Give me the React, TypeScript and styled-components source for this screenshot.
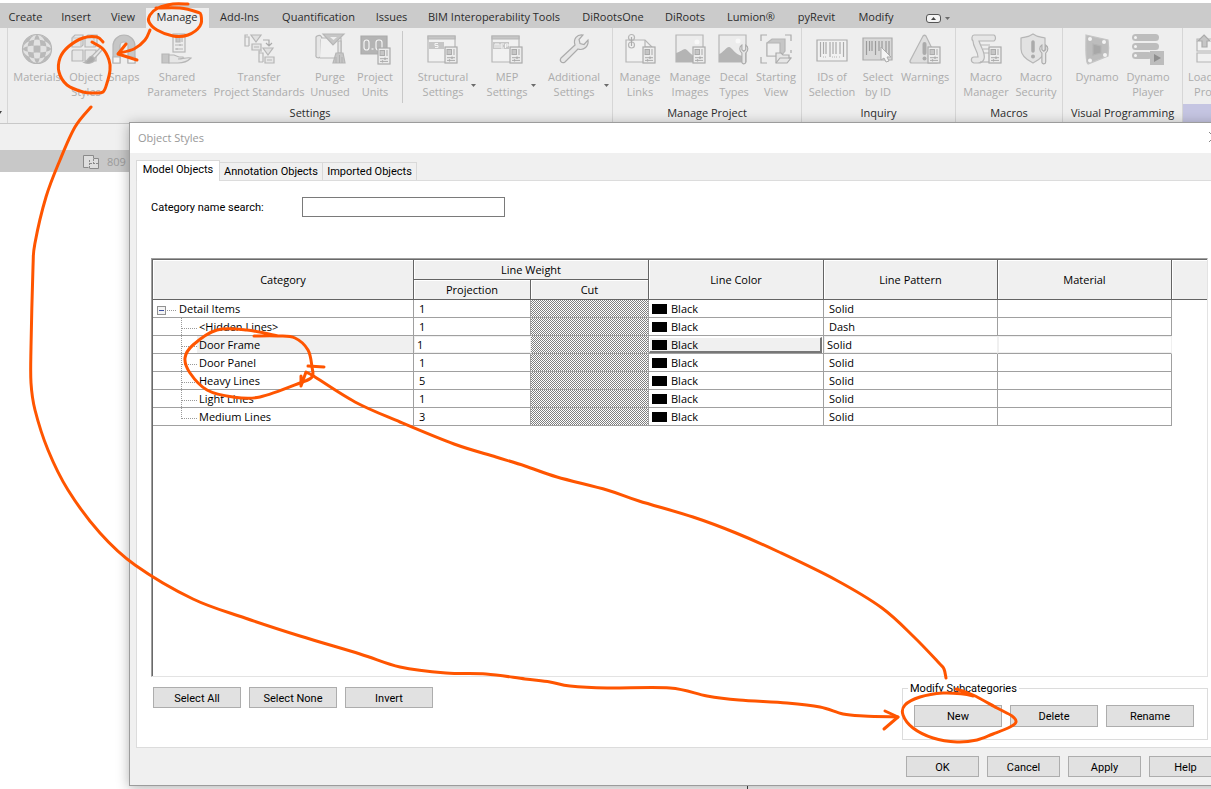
import React from "react";
import styled, { createGlobalStyle } from "styled-components";

const uiFont = `"Open Sans", "Noto Sans", sans-serif`;
const controlFont = `Roboto, "Open Sans", sans-serif`;

const GlobalStyle = createGlobalStyle`
  *, *::before, *::after { box-sizing: border-box; }
  body { margin: 0; background: #fff; font-family: ${uiFont}; font-size: 11px; overflow: hidden; }
  button, input { font: inherit; color: inherit; margin: 0; }
`;

/* ---------- application frame ---------- */

const Desktop = styled.div`
  position: relative;
  display: flex;
  flex-direction: column;
  min-height: 100vh;
  overflow: hidden;
  padding-top: 3px;
`;

const TabStrip = styled.nav`
  display: flex;
  height: 25px;
  background: #cbcbcb;
`;

const RibbonTab = styled.button<{ $width: number; $active?: boolean }>`
  flex: none;
  width: ${(p) => p.$width}px;
  margin: ${(p) => (p.$active ? "5px 0 0" : "0")};
  padding: ${(p) => (p.$active ? "0 1px 2px 0" : "3px 1px 0 0")};
  border: 0;
  background: ${(p) => (p.$active ? "#eeeeee" : "transparent")};
  color: #2b2b2b;
  line-height: 18px;
  white-space: nowrap;
`;

const RibbonToggle = styled.button`
  display: flex;
  align-items: center;
  gap: 4px;
  border: 0;
  background: none;
  padding: 6px 0 0 20px;
`;

const Ribbon = styled.div`
  display: flex;
  height: 96px;
  background: #eeeeee;
  border-bottom: 1px solid #c8c8c8;
`;

const PanelEdge = styled.div`
  flex: none;
  width: 8px;
  padding-top: 83px;
  border-right: 1px solid #d6d6d6;

  svg { display: block; }
`;

const Panel = styled.section<{ $width: number }>`
  flex: none;
  display: flex;
  flex-direction: column;
  width: ${(p) => p.$width}px;
  border-right: 1px solid #d6d6d6;
`;

const PanelTools = styled.div<{ $lead: number }>`
  display: flex;
  height: 76px;
  padding: 5px 0 0 ${(p) => p.$lead}px;
`;

const PanelTitle = styled.h2<{ $tinted?: boolean }>`
  margin: 0;
  height: 19px;
  background: ${(p) => (p.$tinted ? "#c5c5e2" : "transparent")};
  color: #2b2b2b;
  font-size: 11px;
  font-weight: 400;
  line-height: 17px;
  text-align: center;
  white-space: nowrap;
`;

const Tool = styled.button<{ $width: number; $lead?: number }>`
  flex: none;
  display: flex;
  align-items: flex-start;
  height: 70px;
  margin-left: ${(p) => p.$lead ?? 0}px;
  padding: 0;
  border: 0;
  background: none;
  color: #acacac;

  > span {
    display: flex;
    flex-direction: column;
    align-items: center;
    width: ${(p) => p.$width}px;
    line-height: 15px;
    white-space: pre;
    text-align: center;
  }
  > span > svg { display: block; flex: none; margin-bottom: 4px; }
`;

const Caret = styled.i<{ $top: number }>`
  flex: none;
  width: 5px;
  height: 3px;
  margin-top: ${(p) => p.$top}px;
  background: #6b6b6b;
  clip-path: polygon(0 0, 100% 0, 50% 100%);
`;

const ToolDivider = styled.div`
  flex: none;
  width: 1px;
  height: 72px;
  margin: -2px 0 0 8px;
  background: #c8c8c8;
`;

const OptionsBar = styled.div`
  height: 26px;
  background: #f0f0f0;
`;

const ViewTabs = styled.div`
  display: flex;
  align-items: center;
  gap: 8px;
  height: 22px;
  padding: 1px 0 0 83px;
  background: #c8c8c8;
  color: #9b9b9b;
`;

const ViewEdge = styled.div`
  width: 1px;
  height: 4px;
  margin: auto 0 0 747px;
  background: #444;
`;

/* ---------- dialog ---------- */

const Dialog = styled.section`
  position: absolute;
  top: 122px;
  left: 129px;
  right: -26px;
  bottom: 3px;
  display: flex;
  flex-direction: column;
  background: #f0f0f0;
  border: 1px solid #9c9c9c;
  box-shadow: 0 2px 12px rgba(0, 0, 0, 0.3);
  color: #000;
`;

const TitleBar = styled.header`
  display: flex;
  align-items: center;
  justify-content: space-between;
  height: 30px;
  padding: 0 17px 2px 8px;
  background: #fff;

  h1 { margin: 0; font-size: 11px; font-weight: 400; color: #999; }
  button { display: flex; padding: 0; border: 0; background: none; }
`;

const DialogTabs = styled.div`
  display: flex;
  align-items: flex-end;
  height: 27px;
  padding-left: 6px;
`;

const DialogTab = styled.button<{ $width: number; $active?: boolean }>`
  width: ${(p) => p.$width}px;
  height: ${(p) => (p.$active ? 21 : 18)}px;
  margin-bottom: ${(p) => (p.$active ? -1 : 0)}px;
  padding: ${(p) => (p.$active ? "0 0 2px" : "1px 0 0")};
  border: 1px solid #d9d9d9;
  border-bottom: 0;
  border-left-width: ${(p) => (p.$active ? 1 : 0)}px;
  background: ${(p) => (p.$active ? "#fff" : "#f0f0f0")};
  font-family: ${controlFont};
  line-height: 16px;
  white-space: nowrap;
  z-index: 1;
`;

const Pane = styled.div`
  flex: 1;
  display: flex;
  flex-direction: column;
  margin: 0 7px 0 6px;
  padding: 16px 20px 7px 14px;
  border: 1px solid #dcdcdc;
  background: #fff;
`;

const SearchRow = styled.div`
  display: flex;
  align-items: center;
  font-family: ${controlFont};

  label { width: 151px; }
  input { width: 203px; height: 20px; padding: 0 4px; border: 1px solid #7a7a7a; background: #fff; }
`;

const GridFrame = styled.div`
  flex: 1;
  min-height: 0;
  margin-top: 41px;
  padding: 1px 0 0 1px;
  border: 1px solid #a0a0a0;
  border-right-color: #e3e3e3;
  border-bottom-color: #e3e3e3;
  box-shadow: inset 1px 1px #696969;
  background: #fff;
`;

const Grid = styled.table`
  width: 100%;
  table-layout: fixed;
  border-collapse: separate;
  border-spacing: 0;
  line-height: 16px;
`;

const HeadCell = styled.th<{ $last?: boolean }>`
  height: 20px;
  padding: 0;
  border: 0 solid #646464;
  border-width: 0 ${(p) => (p.$last ? 0 : 1)}px 1px 0;
  background: #f0f0f0;
  box-shadow: inset 1px 1px #fff;
  font-weight: 400;
`;

const Cell = styled.td<{ $current?: boolean; $hatched?: boolean }>`
  height: 18px;
  padding: 0 0 0 ${(p) => (p.$current ? 3 : 5)}px;
  border: 0 solid #a0a0a0;
  border-width: 0 1px 1px 0;
  white-space: nowrap;
  ${(p) => p.$current && `border-right-color: #f0f0f0; box-shadow: inset 0 1px #f0f0f0, inset 0 -1px #f0f0f0, inset 1px 0 #f0f0f0;`}
  ${(p) =>
    p.$hatched &&
    `background: repeating-conic-gradient(#808080 0 25%, #fff 0 50%) 0 0 / 2px 2px;`}
`;

const BlankCell = styled.td`
  padding: 0;
`;

const TreeCell = styled(Cell)<{ $root?: boolean }>`
  padding: 0 0 0 ${(p) => (p.$root ? 4 : 28)}px;

  > div { display: flex; align-items: center; height: 17px; }
  > div > svg { flex: none; }
`;

const TreeLabel = styled.span<{ $current?: boolean }>`
  flex: 1;
  align-self: stretch;
  padding-left: 2px;
  background: ${(p) => (p.$current ? "#f0f0f0" : "transparent")};
  line-height: 18px;
`;

const Expander = styled.button`
  display: flex;
  padding: 0;
  border: 0;
  background: none;
`;

const ColorCell = styled(Cell)`
  padding: 0;
`;

const ColorValue = styled.div`
  display: flex;
  align-items: center;
  gap: 4px;
  height: 17px;
  padding-left: 3px;
`;

const ColorButton = styled.button`
  display: flex;
  align-items: center;
  gap: 4px;
  width: calc(100% - 1px);
  height: 16px;
  padding: 1px 0 0 2px;
  border: 1px solid #fff;
  border-right: 2px solid #777;
  border-bottom: 2px solid #777;
  background: #f0f0f0;
  overflow: hidden;
  line-height: 14px;
`;

const Swatch = styled.i`
  width: 15px;
  height: 10px;
  background: #000;
`;

const ActionRow = styled.div`
  display: flex;
  justify-content: space-between;
  padding: 10px 0 0 2px;
`;

const ButtonRow = styled.div`
  display: flex;
  align-items: flex-start;
  gap: 8px;
`;

const PushButton = styled.button<{ $width: number }>`
  flex: none;
  width: ${(p) => p.$width}px;
  height: 21px;
  padding: 2px 0 0;
  border: 1px solid #adadad;
  background: #e1e1e1;
  font-family: ${controlFont};
  line-height: 16px;
`;

const GroupBox = styled.fieldset`
  margin: -7px 0 0;
  padding: 0 13px 12px 11px;
  border: 1px solid #dcdcdc;
  height: 60px;

  legend { padding: 0 2px; margin-left: -6px; line-height: 18px; height: 17px; font-family: ${controlFont}; }
  ${ButtonRow} { padding-top: 8px; }
  ${PushButton} { height: 22px; }
`;

const Footer = styled.footer`
  display: flex;
  justify-content: flex-end;
  gap: 8px;
  padding: 8px 14px 8px 0;
`;

const Markup = styled.svg`
  position: absolute;
  top: 0;
  left: 0;
  pointer-events: none;
`;

/* ---------- ribbon icons ---------- */

const LINE = "#b6b6b6";
const PALE = "#e6e6e6";
const MID = "#c6c6c6";
const DARK = "#ababab";

const Icon = ({ children }: { children: React.ReactNode }) => (
  <svg width="32" height="32" viewBox="0 0 32 32" fill="none" stroke={LINE} strokeWidth="1.2" aria-hidden="true">
    {children}
  </svg>
);

const Card = ({ x, y }: { x: number; y: number }) => (
  <g transform={`translate(${x} ${y})`}>
    <rect x="0" y="0" width="12" height="16" fill="#ececec" stroke={DARK} />
    <rect x="2" y="2.5" width="4.5" height="5" fill={MID} stroke={DARK} strokeWidth="1" />
    <path d="M9 2v6M2 10.7h8M2 13.4h8" strokeWidth="1" stroke={DARK} />
    <path d="M7 9.5v2.4M4.5 12.2v2.4" strokeWidth="1.2" stroke={DARK} />
  </g>
);

const Wrench = ({ x, y, s = 1 }: { x: number; y: number; s?: number }) => (
  <path
    transform={`translate(${x} ${y}) scale(${s})`}
    d="M2 0v5l2 1.5L6 5V0c3 1.500 3 6 0 8.500V18c0 2.500-4 2.500-4 0V8.500C-1 6-1 1.500 2 0z"
    fill={PALE}
    stroke={DARK}
    strokeWidth="1.2"
  />
);

const icons: Record<string, React.ReactNode> = {
  materials: (
    <>
      <circle cx="16" cy="16" r="14.500" fill="#e2e2e2" />
      <path
        fillRule="evenodd"
        stroke="none"
        fill="#b9b9b9"
        d="M16 2a14 14 0 1 0 0 28a14 14 0 1 0 0-28zM16 2a9.500 14 0 1 0 0 28a9.500 14 0 1 0 0-28zM16 2a3.500 14 0 1 0 0 28a3.500 14 0 1 0 0-28zM2 16a14 9.500 0 1 0 28 0a14 9.500 0 1 0-28 0zM2 16a14 3.500 0 1 0 28 0a14 3.500 0 1 0-28 0z"
      />
    </>
  ),
  objectStyles: (
    <>
      <path d="M3 4l2-2h8v10l-2 2H2V5zM16 4l2-2h9v10l-2 2H15V5zM3 17h10v11H2V18zM15 17h11v11H15z" fill={PALE} />
      <path d="M2 5h9v9M15 5h9v9" stroke={MID} />
      <path d="M31 14L22 23l2.500 2.500L32 17z" fill={PALE} />
      <path d="M22 23c-4 0-3 5-8 6.500c5 2 11 0 10.500-4z" fill={DARK} />
    </>
  ),
  snaps: (
    <>
      <path d="M5 30V13a11 11 0 0 1 22 0V30H20V13a4 4 0 0 0-8 0V30z" fill={MID} />
      <path d="M5 24h7v6H5zM20 24h7v6h-7z" fill="#f4f4f4" />
    </>
  ),
  sharedParameters: (
    <>
      <rect x="12" y="1" width="12" height="18" fill="#ececec" />
      <path d="M15 3h4v6h-4z" fill={MID} />
      <path d="M21 3v6M14 12h8M14 16h8" />
      <path d="M19 11v2M16 15v2" />
      <path d="M1 21h7v9H1z" fill={MID} />
      <path d="M8 22h5l5 2h4c1 2-2 2-5 2c4 0 9-2 13-1c-3 3-8 5-13 5H8z" fill={PALE} />
    </>
  ),
  transfer: (
    <>
      <path d="M5 2H2v11h4M2 4h4v9" />
      <path d="M8 2h10l-5 7z" fill="#e0e0e0" />
      <path d="M9 11h9v6H9z" fill={PALE} />
      <path d="M20 7h6v6M23 10l3 3l3-3" stroke={DARK} />
      <path d="M19 18h-3v11h4M16 20h4v9" />
      <path d="M20 15h10l-5 7z" fill="#e0e0e0" />
      <path d="M22 24h9v6h-9zM24 27h5M11 14h5" fill={PALE} />
    </>
  ),
  purge: (
    <>
      <path d="M3 3c4-2 6 2 4 4v16c-1 3-6 2-5-1V4z" fill={PALE} />
      <path d="M7 5h20v20H6" fill="#f0f0f0" />
      <path d="M9 1h21L19 12z" fill={MID} />
      <path d="M16 4h7l-3.500 3z" fill="#eee" stroke="none" />
      <path d="M24 8h3v12h-3z" fill={PALE} />
      <path d="M22 20h7l2 10H19z" fill={MID} />
      <path d="M22 24v6M25.500 22v8M28 24v6" stroke={DARK} strokeWidth="0.8" />
    </>
  ),
  units: (
    <>
      <path d="M2 3h26v18H2z" fill="#b4b4b4" stroke={DARK} />
      <rect x="5" y="7" width="5" height="10" rx="2.500" stroke="#f4f4f4" />
      <path d="M12.500 16h2" stroke="#f4f4f4" />
      <rect x="17" y="7" width="6" height="10" rx="2.500" stroke="#f4f4f4" />
      <Card x={19} y={15} />
    </>
  ),
  structural: (
    <>
      <path d="M1 3h27v26H1z" fill="#f1f1f1" />
      <path d="M1 3h27v3H1z" fill={MID} />
      <path d="M2 9h15v7H2z" fill={MID} stroke="none" />
      <path d="M11 10.500H8v2h3v2H8" stroke="#f4f4f4" strokeWidth="1" />
      <Card x={18} y={14} />
    </>
  ),
  mep: (
    <>
      <path d="M1 3h27v26H1z" fill="#f1f1f1" />
      <path d="M1 3h27v3H1z" fill={MID} />
      <path d="M2 9h16v7H2z" fill={MID} stroke="none" />
      <path d="M4 15v-4h4v4M6 11v4M13 11h-3v4h3M10 13h2M14.500 15v-4H17v2h-2" stroke="#f6f6f6" strokeWidth="1" />
      <Card x={19} y={14} />
    </>
  ),
  additional: (
    <path
      d="M3 25L17 12C15 6 19 1 25 2L21 6.500l1 4l4 1L30 7c1 6-4 11-10 9L7 29c-3 2-6-1-4-4z"
      fill={PALE}
      stroke={DARK}
    />
  ),
  links: (
    <>
      <path d="M2 7h19l7 7v15H2z" fill="#f1f1f1" />
      <path d="M21 7v7h7" />
      <circle cx="7.500" cy="4.500" r="3" />
      <circle cx="7.500" cy="12" r="3" />
      <path d="M7.500 4v9" stroke={DARK} />
      <Card x={19} y={14} />
    </>
  ),
  images: (
    <>
      <path d="M2 2h27v27H2z" fill="#ececec" />
      <circle cx="23" cy="9" r="2.500" fill="#f8f8f8" stroke="none" />
      <path d="M2 20c4-1 7-4 9-4s4 4 10 8v5H2z" fill="#b4b4b4" stroke="none" />
      <Card x={19} y={14} />
    </>
  ),
  decal: (
    <>
      <path d="M1 2h27v27H1z" fill="#ececec" />
      <circle cx="20" cy="8" r="2.500" fill="#f8f8f8" stroke="none" />
      <path d="M1 21c4-1 7-7 10-7s5 7 13 9v6H1z" fill="#b4b4b4" stroke="none" />
      <Wrench x={22} y={12} s={0.95} />
    </>
  ),
  startingView: (
    <>
      <path d="M1 8V2h6M25 2h6v6M1 24v6h6M31 20v-3" stroke={DARK} />
      <path d="M7 10l5-4h13v12l-4 5H7z" fill={MID} />
      <path d="M7 10h13v13H7z" fill="#efefef" />
      <path d="M16 30V20h5l2 2h6v3h2l-4 5z" fill={PALE} stroke={DARK} />
      <path d="M16 30l4-5h11" stroke={DARK} />
    </>
  ),
  barcode: (
    <>
      <path d="M1 7h30v21H1z" fill="#f1f1f1" stroke={DARK} />
      <path d="M4.500 9v15M7.500 9v12M10 9v12M14 9v15M17 9v12M20 9v12M24 9v12M27.500 9v15" stroke={DARK} />
      <path d="M7 24h4M16 24h5M23 24h2" strokeDasharray="1 1" />
    </>
  ),
  selectId: (
    <>
      <path d="M1 5h29v22H1z" fill="#d8d8d8" stroke={DARK} />
      <path d="M4.500 8v14M7.500 8v10M10 8v10M13.500 8v14M17 8v10M20 8v8M24 8v14M27 8v14" stroke="#9a9a9a" />
      <path d="M19 14v13l3-2l2 4l3-1l-2-4h4z" fill="#f4f4f4" stroke={DARK} strokeWidth="1" />
    </>
  ),
  warnings: (
    <>
      <path d="M14 3c1-1 2-1 3 0l12 25c0 1-1 2-2 2H3c-2 0-2-1-2-2z" fill="#dedede" />
      <path d="M15.500 11v9" stroke={DARK} strokeWidth="4" strokeLinecap="round" />
      <circle cx="15.500" cy="25.500" r="2" fill={DARK} stroke="none" />
      <Card x={19} y={14} />
    </>
  ),
  macroManager: (
    <>
      <path d="M4 2h20c2 1 2 5 0 6H9c2 7 7 12 5 18c-1 3-3 4-6 4H4c-4-1-3-6 0-6h4C8 18 3 14 3 8C1 6 2 2 4 2z" fill={PALE} />
      <path d="M11 12h9M13 16h6M14 20h5" />
      <path d="M10 29h14" />
      <Card x={19} y={14} />
    </>
  ),
  macroSecurity: (
    <>
      <path d="M13 1c4 3 8 3 12 4v11c0 6-6 11-12 14C7 27 1 22 1 16V5c4-1 8-1 12-4z" fill="#e2e2e2" />
      <path d="M13 9v9" stroke={DARK} strokeWidth="3.500" strokeLinecap="round" />
      <circle cx="13" cy="23.500" r="2" fill={DARK} stroke="none" />
      <Wrench x={20} y={12} s={0.95} />
    </>
  ),
  dynamo: (
    <>
      <path d="M5 2l22 5c1 6 1 10 0 16L7 31C4 30 5 8 5 2z" fill="#bdbdbd" stroke="#c6c6c6" />
      <path d="M12 11l8 2v7l-8 2z" fill="#a8a8a8" stroke="#b4b4b4" />
      <g fill="#f4f4f4" stroke="none">
        <circle cx="9" cy="6" r="2" />
        <circle cx="23" cy="9" r="2" />
        <circle cx="24" cy="22" r="2" />
        <circle cx="9" cy="27.500" r="2" />
      </g>
    </>
  ),
  dynamoPlayer: (
    <>
      <g fill="#bdbdbd" stroke="none">
        <rect x="0" y="1" width="27" height="7" rx="3.500" />
        <rect x="0" y="10" width="27" height="7" rx="3.500" />
        <rect x="0" y="19" width="20" height="7" rx="3.500" />
        <path d="M18 18h14v14H18z" />
      </g>
      <g fill="#f4f4f4" stroke="none">
        <circle cx="3.500" cy="4.500" r="1.500" />
        <circle cx="3.500" cy="13.500" r="1.500" />
        <circle cx="3.500" cy="22.500" r="1.500" />
      </g>
      <path d="M22 21v8l7-4z" fill="#8f8f8f" stroke="none" />
    </>
  ),
  load: (
    <>
      <path d="M1 29V20h30v9zM1 18V6h30v12z" fill="#f1f1f1" />
      <path d="M8 2l6 6h-3v6H6V8H2z" fill={MID} stroke={DARK} />
    </>
  ),
};

type ToolSpec = { icon: string; label: string; width: number; lead?: number; menu?: boolean; divider?: boolean };

const panels: { title: string; width: number; lead: number; tinted?: boolean; tools: ToolSpec[] }[] = [
  {
    title: "Settings",
    width: 605,
    lead: 2,
    tools: [
      { icon: "materials", label: "Materials", width: 54 },
      { icon: "objectStyles", label: "Object\nStyles", width: 44 },
      { icon: "snaps", label: "Snaps", width: 32 },
      { icon: "sharedParameters", label: "Shared\nParameters", width: 74 },
      { icon: "transfer", label: "Transfer\nProject Standards", width: 90 },
      { icon: "purge", label: "Purge\nUnused", width: 52 },
      { icon: "units", label: "Project\nUnits", width: 38, divider: true },
      { icon: "structural", label: "Structural\nSettings", width: 56, lead: 12, menu: true },
      { icon: "mep", label: "MEP\nSettings", width: 48, lead: 7, menu: true },
      { icon: "additional", label: "Additional\nSettings", width: 60, lead: 8, menu: true },
    ],
  },
  {
    title: "Manage Project",
    width: 189,
    lead: 2,
    tools: [
      { icon: "links", label: "Manage\nLinks", width: 50 },
      { icon: "images", label: "Manage\nImages", width: 50 },
      { icon: "decal", label: "Decal\nTypes", width: 38 },
      { icon: "startingView", label: "Starting\nView", width: 46 },
    ],
  },
  {
    title: "Inquiry",
    width: 154,
    lead: 4,
    tools: [
      { icon: "barcode", label: "IDs of\nSelection", width: 52 },
      { icon: "selectId", label: "Select\nby ID", width: 40 },
      { icon: "warnings", label: "Warnings", width: 54 },
    ],
  },
  {
    title: "Macros",
    width: 107,
    lead: 4,
    tools: [
      { icon: "macroManager", label: "Macro\nManager", width: 52 },
      { icon: "macroSecurity", label: "Macro\nSecurity", width: 48 },
    ],
  },
  {
    title: "Visual Programming",
    width: 120,
    lead: 8,
    tools: [
      { icon: "dynamo", label: "Dynamo", width: 52 },
      { icon: "dynamoPlayer", label: "Dynamo\nPlayer", width: 50 },
    ],
  },
  {
    title: "",
    width: 120,
    lead: 0,
    tinted: true,
    tools: [{ icon: "load", label: "Load into\nProject", width: 58 }],
  },
];

const ribbonTabs: [string, number][] = [
  ["Create", 52],
  ["Insert", 49],
  ["View", 45],
  ["Manage", 63],
  ["Add-Ins", 62],
  ["Quantification", 96],
  ["Issues", 50],
  ["BIM Interoperability Tools", 155],
  ["DiRootsOne", 83],
  ["DiRoots", 61],
  ["Lumion®", 71],
  ["pyRevit", 60],
  ["Modify", 59],
];

/* ---------- category data ---------- */

const rows = [
  { name: "Detail Items", projection: "1", color: "Black", pattern: "Solid" },
  { name: "<Hidden Lines>", projection: "1", color: "Black", pattern: "Dash" },
  { name: "Door Frame", projection: "1", color: "Black", pattern: "Solid" },
  { name: "Door Panel", projection: "1", color: "Black", pattern: "Solid" },
  { name: "Heavy Lines", projection: "5", color: "Black", pattern: "Solid" },
  { name: "Light Lines", projection: "1", color: "Black", pattern: "Solid" },
  { name: "Medium Lines", projection: "3", color: "Black", pattern: "Solid" },
];
const currentRow = 2;

const RootBranch = () => (
  <Expander aria-label="Collapse Detail Items">
    <svg width="20" height="17" viewBox="0 0 20 17" fill="none">
      <rect x="0.500" y="6.500" width="8" height="8" fill="#f4f4f4" stroke="#919191" />
      <path d="M2 10.500h5" stroke="#3c4fa0" />
      <path d="M10 10.500h10" stroke="#999" strokeDasharray="1 1" />
    </svg>
  </Expander>
);

const Branch = ({ last }: { last: boolean }) => (
  <svg width="16" height="17" viewBox="0 0 16 17" fill="none" stroke="#999" strokeDasharray="1 1" aria-hidden="true">
    <path d={last ? "M0.500 0v11" : "M0.500 0v17"} />
    <path d="M1 10.500h15" />
  </svg>
);

/* ---------- hand-drawn markup ---------- */

type Point = [number, number];

const smooth = (pts: Point[]) => {
  let d = `M${pts[0][0]} ${pts[0][1]}`;
  for (let i = 0; i < pts.length - 1; i++) {
    const a = pts[Math.max(i - 1, 0)];
    const b = pts[i];
    const c = pts[i + 1];
    const e = pts[Math.min(i + 2, pts.length - 1)];
    d += `C${b[0] + (c[0] - a[0]) / 6} ${b[1] + (c[1] - a[1]) / 6} ${c[0] - (e[0] - b[0]) / 6} ${c[1] - (e[1] - b[1]) / 6} ${c[0]} ${c[1]}`;
  }
  return d;
};

const curves: Point[][] = [
  [[188, 4], [173, 4], [158, 8], [150, 15], [149, 22], [157, 30], [173, 36], [188, 35], [200, 26], [201, 15], [197, 12], [180, 8], [156, 8]],
  [[150, 30], [145, 40], [134, 49], [119, 53]],
  [[92, 42], [103, 49], [109, 60], [110, 70], [107, 83], [103, 92], [94, 93], [83, 92], [67, 85], [59, 72], [60, 58], [68, 47], [83, 38], [97, 37], [103, 42]],
  [[91, 107], [75, 127], [60, 160], [46, 197], [35, 243], [33, 267], [31, 347], [31, 383], [35, 410], [48, 450], [68, 490], [100, 533], [135, 565], [193, 599], [245, 618], [300, 636], [360, 654], [400, 667], [446, 673], [486, 674], [525, 679], [550, 682], [570, 686], [607, 688], [670, 688], [707, 696], [739, 700], [787, 703], [820, 707], [843, 714], [864, 716], [898, 717]],
  [[956, 689], [973, 695], [997, 708], [1012, 716], [1016, 722], [1010, 727], [993, 734], [977, 740], [957, 742], [933, 738], [913, 728], [903, 715], [905, 705], [920, 697], [943, 693], [963, 694], [973, 696]],
  [[946, 678], [944, 669], [939, 663], [914, 637], [882, 608], [836, 580], [779, 552], [736, 533], [693, 517], [639, 501], [607, 490], [557, 477], [525, 466], [496, 457], [454, 444], [400, 422], [355, 402], [312, 375]],
  [[254, 336], [278, 336], [295, 338], [308, 350], [312, 367], [312, 377], [300, 383], [260, 397], [233, 397], [207, 390], [190, 373], [185, 358], [193, 345], [217, 330], [247, 330], [278, 336]],
];

const strokes = ["M126 44L118 54L137 60", "M885 711L898 717L884 729", "M312 375L306 372L301 386V376", "M308 366L324 367"];

export default function App() {
  return (
    <>
      <GlobalStyle />
      <Desktop>
        <TabStrip>
          {ribbonTabs.map(([name, width]) => (
            <RibbonTab key={name} $width={width} $active={name === "Manage"}>
              {name}
            </RibbonTab>
          ))}
          <RibbonToggle aria-label="Minimize ribbon">
            <svg width="15" height="9" viewBox="0 0 15 9" aria-hidden="true">
              <rect x="0.500" y="0.500" width="14" height="8" rx="2.500" fill="#f4f4f4" stroke="#555" />
              <path d="M5 6l2.500-3L10 6z" fill="#444" />
            </svg>
            <Caret $top={0} />
          </RibbonToggle>
        </TabStrip>

        <Ribbon>
          <PanelEdge>
            <svg width="2" height="3" viewBox="0 0 2 3" aria-hidden="true">
              <path d="M0 0h2L0 3z" fill="#444" />
            </svg>
          </PanelEdge>
          {panels.map((panel) => (
            <Panel key={panel.title || "load"} $width={panel.width}>
              <PanelTools $lead={panel.lead}>
                {panel.tools.map((tool) => (
                  <React.Fragment key={tool.icon}>
                    <Tool $width={tool.width} $lead={tool.lead}>
                      <span>
                        <Icon>{icons[tool.icon]}</Icon>
                        {tool.label}
                      </span>
                      {tool.menu && <Caret $top={51} />}
                    </Tool>
                    {tool.divider && <ToolDivider />}
                  </React.Fragment>
                ))}
              </PanelTools>
              <PanelTitle $tinted={panel.tinted}>{panel.title}</PanelTitle>
            </Panel>
          ))}
        </Ribbon>

        <OptionsBar />
        <ViewTabs>
          <svg width="16" height="14" viewBox="0 0 16 14" fill="none" stroke="#8a8a8a" aria-hidden="true">
            <path d="M10.500 3.500v-3h-10v12h5" fill="#dedede" />
            <path d="M6.500 3.500h9v10h-9z" fill="#dedede" stroke="none" />
            <path d="M10.500 3.500h5v10h-9" />
            <path d="M6.500 13v-9M7 8.500h8M10.500 4v4" strokeDasharray="2 1" />
          </svg>
          809
        </ViewTabs>
        <ViewEdge />

        <Dialog role="dialog" aria-labelledby="dialog-title">
          <TitleBar>
            <h1 id="dialog-title">Object Styles</h1>
            <button aria-label="Close">
              <svg width="10" height="10" viewBox="0 0 10 10" stroke="#888" aria-hidden="true">
                <path d="M0 0l10 10M10 0L0 10" />
              </svg>
            </button>
          </TitleBar>

          <DialogTabs role="tablist">
            <DialogTab role="tab" aria-selected $active $width={84}>
              Model Objects
            </DialogTab>
            <DialogTab role="tab" aria-selected={false} $width={103}>
              Annotation Objects
            </DialogTab>
            <DialogTab role="tab" aria-selected={false} $width={94}>
              Imported Objects
            </DialogTab>
          </DialogTabs>

          <Pane>
            <SearchRow>
              <label htmlFor="category-search">Category name search:</label>
              <input id="category-search" type="text" />
            </SearchRow>

            <GridFrame>
              <Grid>
                <colgroup>
                  <col style={{ width: 261 }} />
                  <col style={{ width: 117 }} />
                  <col style={{ width: 118 }} />
                  <col style={{ width: 175 }} />
                  <col style={{ width: 174 }} />
                  <col style={{ width: 174 }} />
                  <col />
                </colgroup>
                <thead>
                  <tr>
                    <HeadCell rowSpan={2}>Category</HeadCell>
                    <HeadCell colSpan={2}>Line Weight</HeadCell>
                    <HeadCell rowSpan={2}>Line Color</HeadCell>
                    <HeadCell rowSpan={2}>Line Pattern</HeadCell>
                    <HeadCell rowSpan={2}>Material</HeadCell>
                    <HeadCell rowSpan={2} $last />
                  </tr>
                  <tr>
                    <HeadCell>Projection</HeadCell>
                    <HeadCell>Cut</HeadCell>
                  </tr>
                </thead>
                <tbody>
                  {rows.map((row, i) => {
                    const current = i === currentRow;
                    return (
                      <tr key={row.name}>
                        <TreeCell $root={i === 0}>
                          <div>
                            {i === 0 ? <RootBranch /> : <Branch last={i === rows.length - 1} />}
                            <TreeLabel $current={current}>{row.name}</TreeLabel>
                          </div>
                        </TreeCell>
                        <Cell $current={current}>{row.projection}</Cell>
                        <Cell $hatched />
                        <ColorCell>
                          {current ? (
                            <ColorButton>
                              <Swatch />
                              {row.color}
                            </ColorButton>
                          ) : (
                            <ColorValue>
                              <Swatch />
                              {row.color}
                            </ColorValue>
                          )}
                        </ColorCell>
                        <Cell $current={current}>{row.pattern}</Cell>
                        <Cell $current={current} />
                        <BlankCell />
                      </tr>
                    );
                  })}
                </tbody>
              </Grid>
            </GridFrame>

            <ActionRow>
              <ButtonRow>
                <PushButton $width={88}>Select All</PushButton>
                <PushButton $width={88}>Select None</PushButton>
                <PushButton $width={88}>Invert</PushButton>
              </ButtonRow>
              <GroupBox>
                <legend>Modify Subcategories</legend>
                <ButtonRow>
                  <PushButton $width={88}>New</PushButton>
                  <PushButton $width={88}>Delete</PushButton>
                  <PushButton $width={88}>Rename</PushButton>
                </ButtonRow>
              </GroupBox>
            </ActionRow>
          </Pane>

          <Footer>
            <PushButton $width={73}>OK</PushButton>
            <PushButton $width={73}>Cancel</PushButton>
            <PushButton $width={73}>Apply</PushButton>
            <PushButton $width={73}>Help</PushButton>
          </Footer>
        </Dialog>

        <Markup
          width="1211"
          height="789"
          viewBox="0 0 1211 789"
          fill="none"
          stroke="#ff5500"
          strokeWidth="3"
          strokeLinecap="round"
          strokeLinejoin="round"
          aria-hidden="true"
        >
          {curves.map((points, i) => (
            <path key={i} d={smooth(points)} />
          ))}
          {strokes.map((d) => (
            <path key={d} d={d} />
          ))}
        </Markup>
      </Desktop>
    </>
  );
}
